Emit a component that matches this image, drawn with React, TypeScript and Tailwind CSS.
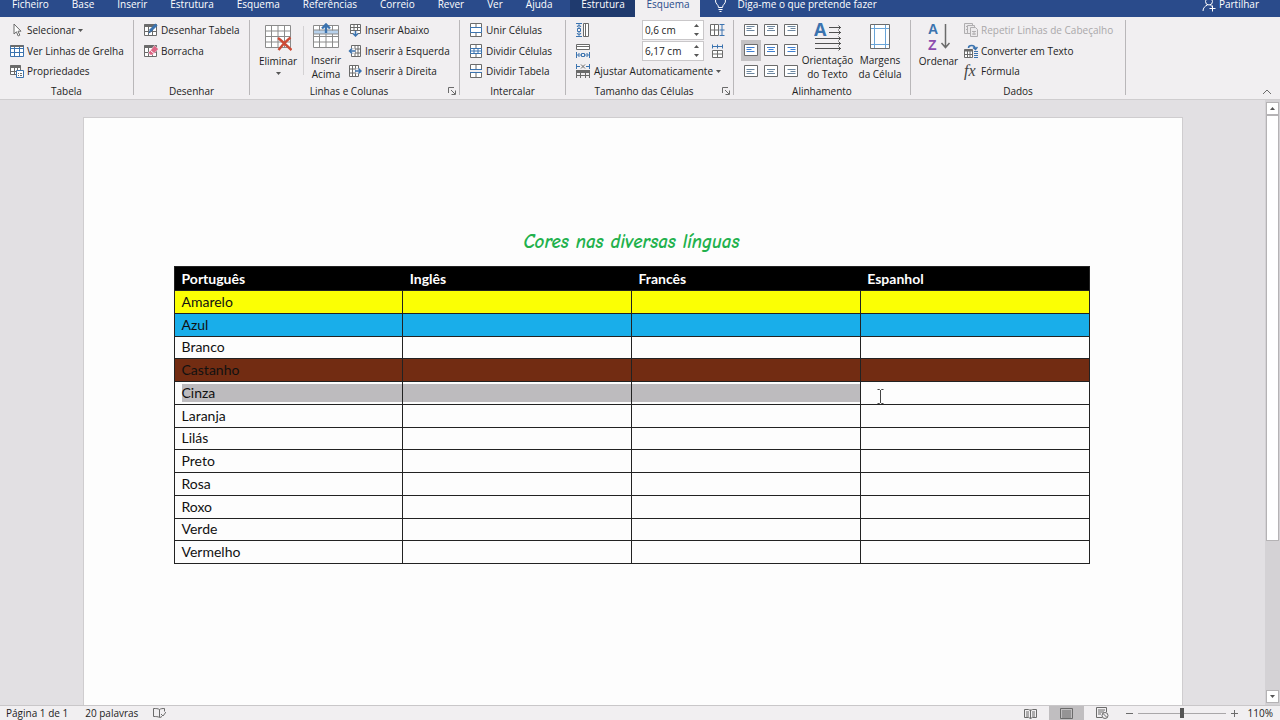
import { useState } from 'react';
import type { ReactNode } from 'react';

const tabs = ['Ficheiro', 'Base', 'Inserir', 'Estrutura', 'Esquema', 'Referências', 'Correio', 'Rever', 'Ver', 'Ajuda'];

const columns = ['Português', 'Inglês', 'Francês', 'Espanhol'];

const colors = [
  { name: 'Amarelo', bg: 'bg-[#fbff04]' },
  { name: 'Azul', bg: 'bg-[#19aeea]' },
  { name: 'Branco', bg: '' },
  { name: 'Castanho', bg: 'bg-[#722c12]' },
  { name: 'Cinza', bg: '', selected: true },
  { name: 'Laranja', bg: '' },
  { name: 'Lilás', bg: '' },
  { name: 'Preto', bg: '' },
  { name: 'Rosa', bg: '' },
  { name: 'Roxo', bg: '' },
  { name: 'Verde', bg: '' },
  { name: 'Vermelho', bg: '' },
];

const DARK = '#6b6b6b';
const BLUE = '#3b73af';

function Icon({ w = 14, h = 14, children }: { w?: number; h?: number; children: ReactNode }) {
  return (
    <svg width={w} height={h} viewBox={`0 0 ${w} ${h}`} fill="none" stroke={DARK} className="shrink-0" aria-hidden="true">
      {children}
    </svg>
  );
}

function Caret() {
  return (
    <svg width="5" height="3" viewBox="0 0 5 3" className="shrink-0" aria-hidden="true">
      <path d="M0 0h5L2.5 3z" fill="#555" />
    </svg>
  );
}

function Group({ label, width, launcher, children }: { label: string; width: string; launcher?: boolean; children: ReactNode }) {
  return (
    <section className={`${width} flex shrink-0 flex-col border-r border-[#b9b7b9]`}>
      <div className="flex h-[61px]">{children}</div>
      <div className="flex h-[14px] items-center pt-[6px]">
        <h2 className="flex-1 text-center">{label}</h2>
        {launcher && (
          <button aria-label={`Mais opções: ${label}`} className="w-[11px]">
            <Icon w={8} h={8}>
              <path d="M.5 6V.5H6M3 3l4 4M7.5 3.5v4h-4" />
            </Icon>
          </button>
        )}
      </div>
    </section>
  );
}

function Stack({ children }: { children: ReactNode }) {
  return <div className="flex flex-col justify-between">{children}</div>;
}

function SmallButton({ icon, label, caret, disabled }: { icon: ReactNode; label: string; caret?: boolean; disabled?: boolean }) {
  return (
    <button disabled={disabled} className="flex h-5 items-center gap-[3px] disabled:text-[#aaa8aa]">
      {icon}
      {label}
      {caret && <Caret />}
    </button>
  );
}

function BigButton({ icon, lines, width, caret }: { icon: ReactNode; lines: string[]; width: string; caret?: boolean }) {
  return (
    <button className={`${width} flex flex-col items-center pt-[3px] leading-[14px]`}>
      <span className="flex h-[31px] items-start">{icon}</span>
      {lines.map((line) => (
        <span key={line}>{line}</span>
      ))}
      {caret && <span className="pt-[4px]"><Caret /></span>}
    </button>
  );
}

const SelectIcon = () => (
  <Icon>
    <path d="M4 1v10l2.4-2.2L8.2 13l1.6-.8L8 8.2h3z" fill="#fff" />
  </Icon>
);

const GridIcon = () => (
  <Icon>
    <path d="M.5 1.5h13v11H.5z" fill="#fff" stroke={BLUE} />
    <path d="M.5 4.5h13M.5 8.5h13M4.5 1.5v11M9.5 1.5v11" stroke={BLUE} />
    <path d="M.5 2h13" strokeWidth="2" />
  </Icon>
);

const PropertiesIcon = () => (
  <Icon>
    <path d="M.5 1.5h10v9H.5zM.5 7.5h6M4.5 2v8M7.5 2v4" fill="#fff" />
    <path d="M.5 2.5h10" strokeWidth="3" />
    <path d="M6.5 6.5h7v7h-7z" fill="#fff" stroke={BLUE} />
    <path d="M8 9.5h1M10 9.5h2M8 11.5h1M10 11.5h2" />
  </Icon>
);

const DrawTableIcon = () => (
  <Icon>
    <path d="M.5 1.5h12v11H.5zM.5 8.5h12M4.5 3v9M8.5 3v9" fill="#fff" />
    <path d="M.5 2.5h12" strokeWidth="3" />
    <path d="M12.5 1.5L6 8" stroke={BLUE} strokeWidth="3" />
    <path d="M4.5 10.5L5 8l2 1.5z" fill={BLUE} stroke="none" />
  </Icon>
);

const EraserIcon = () => (
  <Icon>
    <path d="M.5 1.5h12v11H.5zM.5 8.5h12M4.5 3v9M8.5 3v9" fill="#fff" />
    <path d="M.5 2.5h12" strokeWidth="3" />
    <path d="M4.5 8.5l6-7 4 3.5-6 6H6z" fill="#dd6685" stroke="#fff" strokeWidth=".5" />
    <path d="M6.5 6.5l3.5 3" stroke="#fff" />
  </Icon>
);

const DeleteIcon = () => (
  <Icon w={28} h={28}>
    <path d="M1.5 2.5h25v22h-25zM1.5 8h25M1.5 13.5h25M1.5 19h25M7.5 2.5v22M14 2.5v22M20.5 2.5v22" fill="#fff" stroke="#8b8b8b" />
    <path d="M14 15c4 3 8 7 13.5 12M26.5 14.5c-4 3-8 7-12 12.5" stroke="#cc4a35" strokeWidth="2.4" />
  </Icon>
);

const InsertAboveIcon = () => (
  <Icon w={28} h={28}>
    <path d="M1.5 2.5h25v22h-25zM1.5 13.5h25M1.5 19h25M7.5 11v13M14 11v13M20.5 11v13" fill="#fff" stroke="#8b8b8b" />
    <path d="M2 7h24v4H2z" fill="#b8d2ec" stroke="none" />
    <path d="M7.5 2.5v5M20.5 2.5v5M1.5 7h25M1.5 11h25" stroke="#8b8b8b" />
    <path d="M14 10V2M10 5.5l4-4 4 4" stroke={BLUE} strokeWidth="2.4" />
  </Icon>
);

const InsertBelowIcon = () => (
  <Icon>
    <path d="M2.5 1.5h10v9h-10zM2.5 4.5h10M2.5 7.5h10M6 1.5v6M9.5 1.5v6" fill="#fff" />
    <path d="M5 8h5v5H5z" fill="#f1eff1" stroke="none" />
    <path d="M7.5 8v4.5M5 10.5L7.5 13l2.5-2.5" stroke={BLUE} strokeWidth="1.5" />
  </Icon>
);

const InsertLeftIcon = () => (
  <Icon>
    <path d="M3.5 1.5h9v11h-9zM3.5 5h9M3.5 9h9M7 1.5v11M10 1.5v11" fill="#fff" />
    <path d="M1 4.5h6v5H1z" fill="#f1eff1" stroke="none" />
    <path d="M7.5 7h-6M4 4.5L1.5 7 4 9.5" stroke={BLUE} strokeWidth="1.5" />
  </Icon>
);

const InsertRightIcon = () => (
  <Icon>
    <path d="M1.5 1.5h9v11h-9zM1.5 5h9M1.5 9h9M4.5 1.5v11M7.5 1.5v11" fill="#fff" />
    <path d="M7.5 4.5h6v5h-6z" fill="#f1eff1" stroke="none" />
    <path d="M7 7h6M10.5 4.5L13 7l-2.5 2.5" stroke={BLUE} strokeWidth="1.5" />
  </Icon>
);

const MergeIcon = () => (
  <Icon>
    <path d="M1.5.5h11v13h-11zM7 .5v4M7 9.5v4" fill="#fff" />
    <path d="M1.5 4.5h11v5h-11z" fill="#fff" stroke={BLUE} />
  </Icon>
);

const SplitCellsIcon = () => (
  <Icon>
    <path d="M1.5.5h11v13h-11zM7 .5v4M7 9.5v4" fill="#fff" />
    <path d="M1.5 4.5h11v5h-11zM1.5 7h11M5 4.5v5M9 4.5v5" fill="#fff" stroke={BLUE} />
  </Icon>
);

const SplitTableIcon = () => (
  <Icon>
    <path d="M1.5 5V.5h11V5M7 .5V5M1.5 9v4.5h11V9M7 9v4.5" fill="#fff" />
    <path d="M1 5.5h12M1 8.5h12" stroke={BLUE} />
  </Icon>
);

const HeightIcon = () => (
  <Icon w={16}>
    <path d="M1 .5h6M1 13.5h6M4 2v3M4 9v3M2 4l2-2.5L6 4M2 10l2 2.5L6 10M2.5 5.5h3v3h-3z" stroke={BLUE} />
    <path d="M8.5.5h5v13h-5zM10.5.5v13" fill="#fff" />
  </Icon>
);

const WidthIcon = () => (
  <Icon w={16}>
    <path d="M1.5.5h13v5h-13zM1.5 2.5h13" fill="#fff" />
    <path d="M1.5 8v6M14.5 8v6M3 11h3M10 11h3M4.5 9l-2 2 2 2M11.5 9l2 2-2 2M6.5 9.5h3v3h-3z" stroke={BLUE} />
  </Icon>
);

const AutoFitIcon = () => (
  <Icon w={16}>
    <path d="M1.5 0v5M14.5 0v5M2 2.5h3M11 2.5h3" stroke={BLUE} />
    <path d="M6 .5l4 4M10 .5l-4 4" />
    <path d="M1 7.5h14" strokeWidth="3" />
    <path d="M1.5 8v6M5.5 8v6M10.5 8v6M14.5 8v6M1 11.5h14" />
  </Icon>
);

const RowsIcon = () => (
  <Icon w={15}>
    <path d="M.5 1.5h8v11h-8zM.5 7h8M4.5 1.5v11" fill="#fff" />
    <path d="M12 1v12M9.5 1.5h5M9.5 7h5M9.5 12.5h5" stroke={BLUE} />
  </Icon>
);

const ColumnsIcon = () => (
  <Icon w={15}>
    <path d="M2.5 6.5h10v7h-10zM2.5 10h10M7.5 6.5v7" fill="#fff" />
    <path d="M2 2.5h11M2.5.5v4M7.5.5v4M12.5.5v4" stroke={BLUE} />
  </Icon>
);

// row and col pick where the three text lines sit inside the box
function AlignIcon({ row, col }: { row: number; col: number }) {
  const y = [3.5, 4.5, 5.5][row];
  const long = [2.5, 3, 3.5][col];
  const short = [2.5, 4.5, 6.5][col];
  return (
    <Icon h={12}>
      <path d="M.5.5h13v11H.5z" fill="#fff" />
      <path d={`M${long} ${y - 1}h8M${short} ${y + 1}h5M${long} ${y + 3}h8`} stroke={row === 1 ? '#3f7fd0' : '#6d87a0'} />
    </Icon>
  );
}

const DirectionIcon = () => (
  <Icon w={28} h={28}>
    <text x="0" y="13" fontSize="18" fontWeight="700" fill={BLUE} stroke="none">A</text>
    <path
      d="M15 4.5h12M15 9.5h12M1 15.5h26M1 20.5h26M1 25.5h26M24.5 2.5l2 2-2 2M24.5 7.5l2 2-2 2M24.5 13.5l2 2-2 2M24.5 18.5l2 2-2 2M24.5 23.5l2 2-2 2"
      stroke="#505050"
    />
  </Icon>
);

const MarginsIcon = () => (
  <Icon w={22} h={28}>
    <path d="M1.5 1.5h19v24h-19z" fill="#fff" />
    <path d="M5.5 2v23M16.5 2v23M2 5.5h18M2 21.5h18" stroke="#6aa5d8" />
  </Icon>
);

const SortIcon = () => (
  <Icon w={24} h={28}>
    <g fontFamily="Liberation Sans" fontSize="14" fontWeight="700" stroke="none">
      <text x="1" y="11" fill={BLUE}>A</text>
      <text x="1" y="27" fill="#8d4cae">Z</text>
    </g>
    <path d="M18.5 1v23M14.5 20l4 4.5 4-4.5" strokeWidth="1.5" />
  </Icon>
);

const RepeatIcon = () => (
  <Icon>
    <g stroke="#b0aeb0" fill="#eceaec">
      <path d="M.5.5h8v10h-8zM2 3.5h5M2 6.5h3" />
      <path d="M3.5 2.5h7v8h-7z" />
      <path d="M6.5 4.5h5l2 2v7h-7zM8 8.5h4M8 11h4M10 8v4" />
    </g>
  </Icon>
);

const ConvertIcon = () => (
  <Icon>
    <path d="M.5 5.5h8v8h-8zM.5 10.5h8M3.5 7v6M6 7v6" fill="#fff" />
    <path d="M.5 6.5h8" strokeWidth="2" />
    <path d="M10 7.5h4M10 9.5h4M10 11.5h4M10 13.5h4" stroke={BLUE} />
    <path d="M4.5 4c0-3 6-4 7 1M9 3.5l2.5 2 2-2.5" stroke={BLUE} strokeWidth="1.5" />
  </Icon>
);

const FormulaIcon = () => (
  <span className="w-[14px] text-left font-['Liberation_Serif',serif] text-[16px] leading-none text-[#444] italic">fx</span>
);

function SizeField({ label, initial }: { label: string; initial: string }) {
  const [value, setValue] = useState(initial);
  return (
    <div className="flex h-5 w-[62px] items-center border border-[#c9c7c9] bg-white">
      <input
        aria-label={label}
        value={value}
        onChange={(e) => setValue(e.target.value)}
        className="min-w-0 flex-1 pl-[2px] outline-none"
      />
      <span className="flex w-[14px] flex-col items-center gap-[6px]">
        <button aria-label={`Aumentar ${label}`} className="rotate-180"><Caret /></button>
        <button aria-label={`Diminuir ${label}`}><Caret /></button>
      </span>
    </div>
  );
}

function Header() {
  return (
    <header className="flex h-[17px] shrink-0 items-end overflow-hidden bg-[#2a4b8b] text-white">
      <nav className="flex">
        {tabs.map((tab) => (
          <button key={tab} className="h-[26px] pr-[11px] pl-[12px]">{tab}</button>
        ))}
        <button className="ml-[7px] h-[26px] w-[65px] bg-[#1f3a6e]">Estrutura</button>
        <button className="h-[26px] w-[65px] bg-[#f1eff1] text-[#2a4b8b]">Esquema</button>
      </nav>
      <button className="flex h-[26px] items-center gap-[10px] pl-[14px]">
        <Icon w={13} h={16}>
          <g stroke="#fff">
            <path d="M4.5 11.5c0-3-3-3.5-3-6.5a5 5 0 0 1 10 0c0 3-3 3.5-3 6.5zM4.5 13.5h4M5.5 15.5h2" />
          </g>
        </Icon>
        Diga-me o que pretende fazer
      </button>
      <button className="ml-auto flex h-[26px] items-center gap-[3px] pr-[21px]">
        <Icon h={15}>
          <g stroke="#fff">
            <circle cx="7" cy="4.5" r="3.5" />
            <path d="M1 14c0-3 2-5 4.5-6M8.5 8l2 2M10.5 8.5v6M7.5 11.5h6" />
          </g>
        </Icon>
        Partilhar
      </button>
    </header>
  );
}

function Ribbon() {
  const [align, setAlign] = useState(3);
  return (
    <div className="flex h-[83px] shrink-0 border-b border-[#cfcdcf] bg-[#f1eff1] pt-[3px] pb-[4px] text-[#222]">
      <Group label="Tabela" width="w-[134px]">
        <div className="flex pl-[10px]">
          <Stack>
            <SmallButton icon={<SelectIcon />} label="Selecionar" caret />
            <SmallButton icon={<GridIcon />} label="Ver Linhas de Grelha" />
            <SmallButton icon={<PropertiesIcon />} label="Propriedades" />
          </Stack>
        </div>
      </Group>

      <Group label="Desenhar" width="w-[116px]">
        <div className="flex flex-col gap-[1px] pl-[10px]">
          <SmallButton icon={<DrawTableIcon />} label="Desenhar Tabela" />
          <SmallButton icon={<EraserIcon />} label="Borracha" />
        </div>
      </Group>

      <Group label="Linhas e Colunas" width="w-[210px]" launcher>
        <div className="flex pl-[3px]">
          <BigButton icon={<DeleteIcon />} lines={['Eliminar']} width="w-[50px]" caret />
          <div className="my-[6px] w-px bg-[#d3d1d3]" />
          <BigButton icon={<InsertAboveIcon />} lines={['Inserir', 'Acima']} width="w-[44px]" />
          <Stack>
            <SmallButton icon={<InsertBelowIcon />} label="Inserir Abaixo" />
            <SmallButton icon={<InsertLeftIcon />} label="Inserir à Esquerda" />
            <SmallButton icon={<InsertRightIcon />} label="Inserir à Direita" />
          </Stack>
        </div>
      </Group>

      <Group label="Intercalar" width="w-[106px]">
        <div className="flex pl-[9px]">
          <Stack>
            <SmallButton icon={<MergeIcon />} label="Unir Células" />
            <SmallButton icon={<SplitCellsIcon />} label="Dividir Células" />
            <SmallButton icon={<SplitTableIcon />} label="Dividir Tabela" />
          </Stack>
        </div>
      </Group>

      <Group label="Tamanho das Células" width="w-[168px]" launcher>
        <div className="flex flex-1 flex-col justify-between pr-[8px] pl-[9px]">
          <div className="flex items-center">
            <HeightIcon />
            <div className="mr-[6px] ml-auto"><SizeField label="Altura" initial="0,6 cm" /></div>
            <button aria-label="Distribuir Linhas"><RowsIcon /></button>
          </div>
          <div className="flex items-center">
            <WidthIcon />
            <div className="mr-[6px] ml-auto"><SizeField label="Largura" initial="6,17 cm" /></div>
            <button aria-label="Distribuir Colunas"><ColumnsIcon /></button>
          </div>
          <SmallButton icon={<AutoFitIcon />} label="Ajustar Automaticamente" caret />
        </div>
      </Group>

      <Group label="Alinhamento" width="w-[177px]">
        <div className="grid h-[61px] grid-cols-3 pl-[7px]">
          {[0, 1, 2, 3, 4, 5, 6, 7, 8].map((i) => (
            <button
              key={i}
              aria-label={`Alinhar ${i + 1}`}
              aria-pressed={align === i}
              onClick={() => setAlign(i)}
              className={`flex w-5 items-center justify-center ${align === i ? 'bg-[#c4c2c4]' : ''}`}
            >
              <AlignIcon row={Math.floor(i / 3)} col={i % 3} />
            </button>
          ))}
        </div>
        <BigButton icon={<DirectionIcon />} lines={['Orientação', 'do Texto']} width="w-[53px]" />
        <BigButton icon={<MarginsIcon />} lines={['Margens', 'da Célula']} width="w-[52px]" />
      </Group>

      <Group label="Dados" width="w-[215px]">
        <div className="flex pl-[2px]">
          <BigButton icon={<SortIcon />} lines={['Ordenar']} width="w-[51px]" />
          <Stack>
            <SmallButton icon={<RepeatIcon />} label="Repetir Linhas de Cabeçalho" disabled />
            <SmallButton icon={<ConvertIcon />} label="Converter em Texto" />
            <SmallButton icon={<FormulaIcon />} label="Fórmula" />
          </Stack>
        </div>
      </Group>

      <button aria-label="Fechar friso" className="mr-[8px] ml-auto self-end">
        <Icon w={10} h={6}>
          <path d="M1 5l4-4 4 4" />
        </Icon>
      </button>
    </div>
  );
}

function ColorsTable() {
  return (
    <table className="h-[298px] w-full table-fixed border-collapse border border-[#222] font-[Lato,sans-serif] text-[14px] leading-[18px] text-[#111]">
      <thead>
        <tr className="h-[24px] bg-black text-white">
          {columns.map((column) => (
            <th key={column} scope="col" className="p-0 pl-[7px] text-left font-bold">{column}</th>
          ))}
        </tr>
      </thead>
      <tbody>
        {colors.map((color) => (
          <tr key={color.name} className={color.bg}>
            <td className="border border-[#222] p-0 pl-[7px]">
              <span className={color.selected ? 'block bg-[#bdbbbe]' : 'block'}>{color.name}</span>
            </td>
            <td className="border border-[#222] p-0">{color.selected && <span className="block h-[18px] bg-[#bdbbbe]" />}</td>
            <td className="border border-[#222] p-0">{color.selected && <span className="block h-[18px] bg-[#bdbbbe]" />}</td>
            <td className="border border-[#222] p-0 pl-4 align-bottom">
              {color.selected && (
                <Icon w={7} h={15}>
                  <path d="M.5.5h2l1 1 1-1h2M3.5 1v13M.5 14.5h2l1-1 1 1h2" stroke="#444" />
                </Icon>
              )}
            </td>
          </tr>
        ))}
      </tbody>
    </table>
  );
}

function ScrollBar() {
  return (
    <div className="flex w-[15px] flex-col bg-[#d4d2d5] px-[1px] pt-[2px] pb-[2px]">
      <button aria-label="Deslocar para cima" className="flex h-[13px] items-center justify-center border border-[#b5b3b5] bg-white">
        <span className="rotate-180"><Caret /></span>
      </button>
      <div className="flex-1">
        <div className="h-[74%] border border-[#b5b3b5] bg-white" />
      </div>
      <button aria-label="Deslocar para baixo" className="flex h-[13px] items-center justify-center border border-[#b5b3b5] bg-white">
        <Caret />
      </button>
    </div>
  );
}

function StatusBar() {
  const [zoom, setZoom] = useState(110);
  return (
    <footer className="flex h-[15px] shrink-0 items-center border-t border-[#c9c7c9] bg-[#f1eff1] pr-[7px] pl-[6px] text-[#222]">
      <span className="mr-[17px]">Página 1 de 1</span>
      <span className="mr-[15px]">20 palavras</span>
      <Icon w={13} h={12}>
        <path d="M6.5 2.5v8M6.5 2.5c-1.5-1-3.5-1-6-1v8c2.5 0 4.5 0 6 1M6.5 2.5c1.5-1 3-1 5-1v3M7 10.5l2-1M8 7l2 2 3-4" />
      </Icon>
      <div className="ml-auto flex h-full items-center">
        <button aria-label="Modo de leitura" className="mr-[12px]">
          <Icon w={13} h={11}>
            <path d="M6.5 1.5v9M.5 1.5h4l2 1 2-1h4v8h-4l-2 1-2-1h-4zM2 4h3M2 6h3M2 8h3M8 4h3M8 6h3M8 8h3" />
          </Icon>
        </button>
        <button aria-label="Esquema de impressão" aria-pressed="true" className="flex h-full w-[35px] items-center justify-center bg-[#c0bec0]">
          <Icon w={13} h={11}>
            <path d="M.5.5h12v10H.5zM2 3h9M2 5h9M2 7h9M2 9h9" />
          </Icon>
        </button>
        <button aria-label="Esquema Web" className="mr-[16px] ml-[12px]">
          <Icon w={13} h={12}>
            <path d="M6 10.5H.5V.5h10V5M2 3h7M2 5h6M2 7h3" />
            <circle cx="9" cy="8.5" r="3" />
            <path d="M7 6.5l4 4" />
          </Icon>
        </button>
        <button aria-label="Reduzir" onClick={() => setZoom(zoom - 10)}>
          <Icon w={9} h={9}><path d="M1 4.5h7" /></Icon>
        </button>
        <input
          type="range"
          aria-label="Zoom"
          min={20}
          max={200}
          value={zoom}
          onChange={(e) => setZoom(Number(e.target.value))}
          className="mx-[4px] h-px w-[88px] appearance-none bg-[#a9a7a9] [&::-webkit-slider-thumb]:h-[10px] [&::-webkit-slider-thumb]:w-[4px] [&::-webkit-slider-thumb]:appearance-none [&::-webkit-slider-thumb]:bg-[#555]"
        />
        <button aria-label="Ampliar" onClick={() => setZoom(zoom + 10)}>
          <Icon w={9} h={9}><path d="M1 4.5h7M4.5 1v7" /></Icon>
        </button>
        <span className="w-[34px] text-right">{zoom}%</span>
      </div>
    </footer>
  );
}

export default function App() {
  return (
    <div className="flex h-screen flex-col overflow-hidden font-['Open_Sans','Noto_Sans',sans-serif] text-[10px] leading-[14px] whitespace-nowrap">
      <Header />
      <Ribbon />
      <div className="flex min-h-0 flex-1 bg-[#e2e0e3]">
        <main className="flex flex-1 justify-center pt-[17px]">
          <article className="w-full max-w-[1100px] border border-b-0 border-[#cfcdcf] bg-[#fdfdfd] pt-[108px] pr-[92px] pl-[90px]">
            <h1 className="pb-[8px] text-center font-['Comic_Sans_MS','Comic_Neue',Lato,sans-serif] text-[19px] leading-[32px] font-bold text-[#22b14c] italic">
              Cores nas diversas línguas
            </h1>
            <ColorsTable />
          </article>
        </main>
        <ScrollBar />
      </div>
      <StatusBar />
    </div>
  );
}
